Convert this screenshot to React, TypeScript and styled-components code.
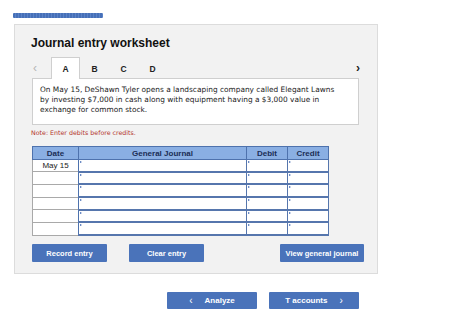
import React from 'react';
import styled, { createGlobalStyle } from 'styled-components';

const GlobalStyle = createGlobalStyle`
  html, body {
    margin: 0;
    padding: 0;
    background: #ffffff;
  }
  body {
    font-family: "Liberation Sans", Arial, sans-serif;
    color: #222222;
  }
`;

const Page = styled.div`
  width: 474px;
  height: 317px;
  padding: 13px 0 0 13px;
  box-sizing: border-box;
  display: flex;
  flex-direction: column;
`;

const ProgressBar = styled.div`
  width: 90px;
  height: 5px;
  border-radius: 1px;
  background: repeating-linear-gradient(90deg, #4670b8 0 2px, #5a82c6 2px 3px);
`;

const Panel = styled.section`
  margin: 6px 0 0 1px;
  width: 364px;
  height: 250px;
  box-sizing: border-box;
  background: #f2f2f2;
  border: 1px solid #dcdcdc;
  padding: 11px 15px 0 16px;
  display: flex;
  flex-direction: column;
`;

const Title = styled.h1`
  margin: 0;
  font-size: 12px;
  line-height: 14px;
  font-weight: bold;
  color: #111111;
`;

const TabRow = styled.div`
  margin-top: 7px;
  width: 328px;
  margin-left: 1px;
  height: 21px;
  display: flex;
  align-items: stretch;
`;

const Arrow = styled.span<{ $muted?: boolean }>`
  width: 18px;
  display: flex;
  align-items: center;
  justify-content: ${({ $muted }) => ($muted ? 'flex-start' : 'flex-end')};
  padding-left: ${({ $muted }) => ($muted ? '1px' : '0')};
  color: ${({ $muted }) => ($muted ? '#b5b5b5' : '#222222')};
  font-size: 12px;
  font-weight: ${({ $muted }) => ($muted ? 'normal' : 'bold')};
`;

const Tab = styled.div<{ $active?: boolean }>`
  width: 29px;
  box-sizing: border-box;
  display: flex;
  align-items: center;
  justify-content: center;
  font-size: 8.5px;
  font-weight: bold;
  color: #222222;
  background: ${({ $active }) => ($active ? '#ffffff' : 'transparent')};
  border: 1px solid ${({ $active }) => ($active ? '#cfcfcf' : 'transparent')};
  border-bottom: none;
  margin-bottom: -1px;
  position: relative;
  z-index: 1;
`;

const Spacer = styled.div`
  flex: 1;
`;

const Description = styled.div`
  width: 327px;
  height: 47px;
  margin-left: 1px;
  box-sizing: border-box;
  background: #ffffff;
  border: 1px solid #cfcfcf;
  padding: 6px 20px 6px 7px;
  font-family: "DejaVu Sans", Verdana, sans-serif;
  font-size: 7.4px;
  line-height: 10px;
  color: #1a1a1a;
`;

const Note = styled.p`
  margin: 3px 0 0 0;
  font-family: "DejaVu Sans", Verdana, sans-serif;
  font-size: 6.3px;
  line-height: 10px;
  color: #b2322b;
`;

const Table = styled.table`
  margin: 8px 0 0 1px;
  width: 296px;
  border-collapse: collapse;
  table-layout: fixed;
  font-size: 8px;
`;

const HeadCell = styled.th`
  height: 12px;
  padding: 0;
  background: #8aafe3;
  border: 1px solid #4e72ad;
  color: #1b2d55;
  font-weight: bold;
  text-align: center;
`;

const DateCell = styled.td`
  height: 10.7px;
  padding: 0;
  background: #ffffff;
  border: 1px solid #a9a9a9;
  border-right: 1px solid #4e72ad;
  text-align: center;
  color: #222222;
`;

const InputCell = styled.td`
  height: 10.7px;
  padding: 0;
  background: #ffffff;
  border: 1px solid #5676ad;
  border-bottom: 2px solid #5676ad;
  position: relative;

  &::before {
    content: '';
    position: absolute;
    left: 1px;
    top: 1px;
    border-top: 1.5px solid transparent;
    border-bottom: 1.5px solid transparent;
    border-left: 2.5px solid #3d66b0;
  }
`;

const ButtonRow = styled.div`
  margin-top: 8px;
  margin-left: 1px;
  width: 332px;
  display: flex;
  gap: 22px;
`;

const ActionButton = styled.button<{ $width: number }>`
  width: ${({ $width }) => $width}px;
  height: 18px;
  padding: 0;
  border: none;
  border-radius: 1px;
  background: #4a73ba;
  color: #ffffff;
  font-family: "Liberation Sans", Arial, sans-serif;
  font-size: 7.5px;
  font-weight: bold;
  &:last-child {
    margin-left: auto;
  }
`;

const NavRow = styled.nav`
  margin: 18px 0 0 154px;
  display: flex;
  gap: 12px;
`;

const NavButton = styled.button`
  width: 90px;
  height: 17px;
  padding: 0;
  border: none;
  border-radius: 1px;
  background: #4a73ba;
  color: #ffffff;
  font-family: "Liberation Sans", Arial, sans-serif;
  font-size: 8px;
  font-weight: bold;
  display: flex;
  align-items: center;
  justify-content: center;
  gap: 12px;
`;

const Chevron = styled.span`
  font-size: 10px;
  font-weight: normal;
`;

const columns = [
  { name: 'Date', width: 46 },
  { name: 'General Journal', width: 168 },
  { name: 'Debit', width: 41 },
  { name: 'Credit', width: 41 },
];

const rows = ['May 15', '', '', '', '', ''];

export default function App() {
  return (
    <>
      <GlobalStyle />
      <Page>
        <ProgressBar />
        <Panel>
          <Title>Journal entry worksheet</Title>
          <TabRow>
            <Arrow $muted>&lsaquo;</Arrow>
            <Tab $active>A</Tab>
            <Tab>B</Tab>
            <Tab>C</Tab>
            <Tab>D</Tab>
            <Spacer />
            <Arrow>&rsaquo;</Arrow>
          </TabRow>
          <Description>
            On May 15, DeShawn Tyler opens a landscaping company called Elegant Lawns by investing $7,000 in cash
            along with equipment having a $3,000 value in exchange for common stock.
          </Description>
          <Note>Note: Enter debits before credits.</Note>
          <Table>
            <colgroup>
              {columns.map(({ name, width }) => (
                <col key={name} style={{ width }} />
              ))}
            </colgroup>
            <thead>
              <tr>
                {columns.map(({ name }) => (
                  <HeadCell key={name}>{name}</HeadCell>
                ))}
              </tr>
            </thead>
            <tbody>
              {rows.map((date, index) => (
                <tr key={index}>
                  <DateCell>{date}</DateCell>
                  <InputCell />
                  <InputCell />
                  <InputCell />
                </tr>
              ))}
            </tbody>
          </Table>
          <ButtonRow>
            <ActionButton $width={75}>Record entry</ActionButton>
            <ActionButton $width={75}>Clear entry</ActionButton>
            <ActionButton $width={84}>View general journal</ActionButton>
          </ButtonRow>
        </Panel>
        <NavRow>
          <NavButton>
            <Chevron>&lsaquo;</Chevron>
            <span>Analyze</span>
          </NavButton>
          <NavButton>
            <span>T accounts</span>
            <Chevron>&rsaquo;</Chevron>
          </NavButton>
        </NavRow>
      </Page>
    </>
  );
}
